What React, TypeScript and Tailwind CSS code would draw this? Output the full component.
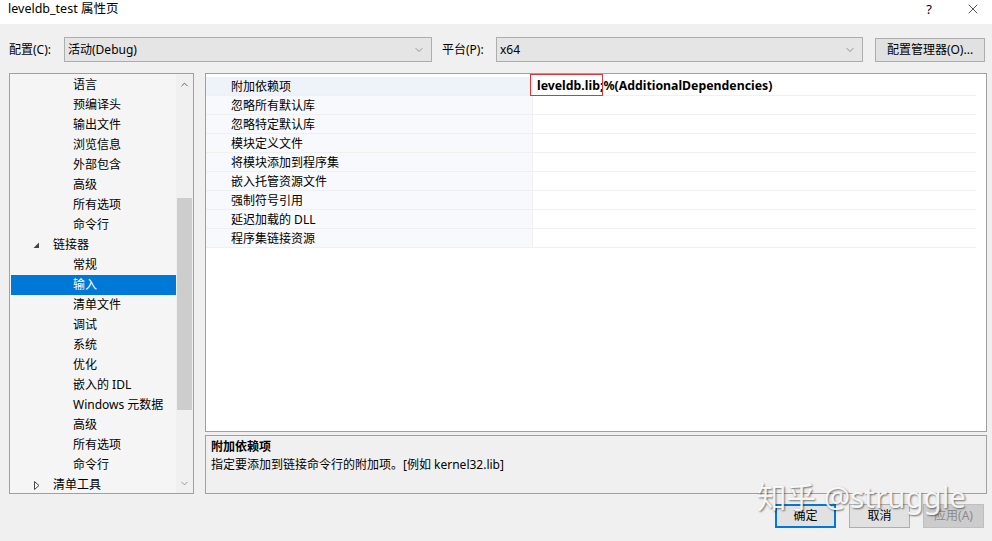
import { ChevronDown, ChevronUp, X } from 'lucide-react';

const treeItems: { label: string; level: number; arrow?: 'open' | 'closed'; selected?: boolean }[] = [
  { label: '语言', level: 2 },
  { label: '预编译头', level: 2 },
  { label: '输出文件', level: 2 },
  { label: '浏览信息', level: 2 },
  { label: '外部包含', level: 2 },
  { label: '高级', level: 2 },
  { label: '所有选项', level: 2 },
  { label: '命令行', level: 2 },
  { label: '链接器', level: 1, arrow: 'open' },
  { label: '常规', level: 2 },
  { label: '输入', level: 2, selected: true },
  { label: '清单文件', level: 2 },
  { label: '调试', level: 2 },
  { label: '系统', level: 2 },
  { label: '优化', level: 2 },
  { label: '嵌入的 IDL', level: 2 },
  { label: 'Windows 元数据', level: 2 },
  { label: '高级', level: 2 },
  { label: '所有选项', level: 2 },
  { label: '命令行', level: 2 },
  { label: '清单工具', level: 1, arrow: 'closed' },
];

const props = [
  '附加依赖项',
  '忽略所有默认库',
  '忽略特定默认库',
  '模块定义文件',
  '将模块添加到程序集',
  '嵌入托管资源文件',
  '强制符号引用',
  '延迟加载的 DLL',
  '程序集链接资源',
];

const font = 'font-["Noto_Sans","Noto_Sans_CJK_SC",sans-serif]';

export default function App() {
  return (
    <div className={`w-[992px] h-[541px] bg-[#f0f0f0] flex flex-col text-[12px] text-black relative overflow-hidden ${font}`}>
      {/* Title bar */}
      <div className="h-[24px] bg-white flex items-start justify-between">
        <span className="pl-[8px] pt-[1px] leading-[16px] text-[12.5px]">leveldb_test 属性页</span>
        <div className="flex items-start">
          <span className="w-[20px] pt-[1px] text-center leading-[16px] text-[13px] mr-[26px]">?</span>
          <X size={16} strokeWidth={1} className="mt-[1px] mr-[11px]" />
        </div>
      </div>

      {/* Config row */}
      <div className="flex items-center mt-[13px] pl-[9px] h-[25px]">
        <span className="w-[55px]">配置(C):</span>
        <div className="w-[368px] h-[25px] bg-[#e5e5e5] border border-[#adadad] flex items-center justify-between pl-[3px] pr-[6px]">
          <span>活动(Debug)</span>
          <ChevronDown size={12} strokeWidth={1.2} className="text-[#555]" />
        </div>
        <span className="ml-[10px] w-[54px]">平台(P):</span>
        <div className="w-[367px] h-[25px] bg-[#e5e5e5] border border-[#adadad] flex items-center justify-between pl-[3px] pr-[6px]">
          <span>x64</span>
          <ChevronDown size={12} strokeWidth={1.2} className="text-[#555]" />
        </div>
        <button className="ml-[12px] w-[110px] h-[24px] bg-[#e1e1e1] border border-[#adadad]">配置管理器(O)...</button>
      </div>

      {/* Main */}
      <div className="flex mt-[11px] pl-[9px] h-[421px] gap-[11px]">
        {/* Tree */}
        <div className="w-[185px] h-full border border-[#a0a0a0] bg-[#f5f5f5] flex overflow-hidden">
          <div className="flex-1 flex flex-col pl-[1px] pt-[1px]">
            {treeItems.map((it, i) => (
              <div
                key={i}
                className={`h-[20px] shrink-0 flex items-center ${it.selected ? 'bg-[#0078d7] text-white' : ''}`}
              >
                {it.level === 1 ? (
                  <>
                    <span className="w-[31px] flex justify-end pr-[2px]">
                      {it.arrow === 'open' ? (
                        <svg width="7" height="7" viewBox="0 0 7 7"><path d="M6 0.5 L6 6 L0.5 6 Z" fill="#444" /></svg>
                      ) : (
                        <svg width="6" height="9" viewBox="0 0 6 9"><path d="M0.5 0.5 L5 4.5 L0.5 8.5 Z" fill="none" stroke="#444" strokeWidth="1" /></svg>
                      )}
                    </span>
                    <span className="ml-[11px]">{it.label}</span>
                  </>
                ) : (
                  <span className="pl-[62px]">{it.label}</span>
                )}
              </div>
            ))}
          </div>
          <div className="w-[17px] bg-[#f0f0f0] flex flex-col items-center">
            <div className="h-[20px] flex items-center"><ChevronUp size={11} strokeWidth={2} className="text-[#555]" /></div>
            <div className="mt-[104px] w-[15px] h-[212px] bg-[#cdcdcd]" />
            <div className="flex-1" />
            <div className="h-[20px] flex items-center"><ChevronDown size={11} strokeWidth={1.5} className="text-[#777]" /></div>
          </div>
        </div>

        {/* Right */}
        <div className="w-[782px] flex flex-col gap-[3px]">
          <div className="h-[360px] border border-[#a0a0a0] bg-white pt-[3px] pr-[10px]">
            {props.map((p, i) => (
              <div key={i} className="h-[19px] flex border-b border-[#f0f0f0]">
                <div className={`w-[327px] flex items-center pl-[25px] pt-[1px] border-r border-[#f0f0f0] ${i === 0 ? 'bg-[#eef2f9]' : 'bg-[#f7f9fc]'}`}>
                  {p}
                </div>
                <div className="flex-1 flex items-center pl-[4px] pt-[1px] relative">
                  {i === 0 && (
                    <>
                      <span className="font-bold text-[12.3px]">leveldb.lib;%(AdditionalDependencies)</span>
                      <div className="absolute left-[-3px] top-[-3px] w-[73px] h-[22px] border border-[#d9363e]" />
                    </>
                  )}
                </div>
              </div>
            ))}
          </div>
          <div className="h-[59px] border border-[#a0a0a0] pl-[5px] pt-[2px] leading-[18px]">
            <div className="font-bold">附加依赖项</div>
            <div>指定要添加到链接命令行的附加项。[例如 kernel32.lib]</div>
          </div>
        </div>
      </div>

      {/* Buttons */}
      <div className="flex justify-end gap-[13px] mt-[10px] pr-[8px]">
        <button className="w-[61px] h-[24px] bg-[#e1e1e1] border-2 border-[#0078d7]">确定</button>
        <button className="w-[61px] h-[24px] bg-[#e1e1e1] border border-[#adadad]">取消</button>
        <button className="w-[61px] h-[24px] bg-[#cccccc] border border-[#bfbfbf] text-[#8a8a8a]">应用(A)</button>
      </div>

      {/* Watermark */}
      <div className="absolute left-[757px] top-[477px] whitespace-nowrap text-[29.5px] leading-[40px] text-white/90 [text-shadow:1px_1px_2px_rgba(0,0,0,0.55)] pointer-events-none">
        知乎 @struggle
      </div>
    </div>
  );
}
